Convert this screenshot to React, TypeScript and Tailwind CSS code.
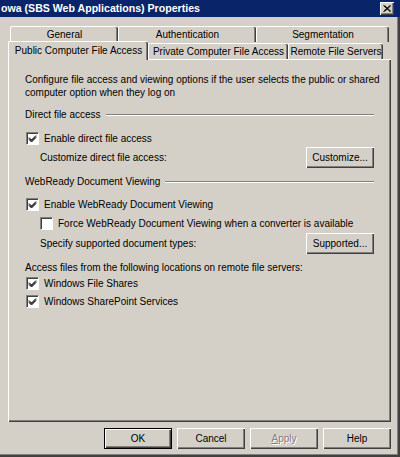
import React from "react";

const font = { fontFamily: '"Liberation Sans", Arial, sans-serif' };

function CheckBox({ checked }: { checked: boolean }) {
  return (
    <span className="relative inline-block w-[13px] h-[13px] shrink-0 bg-white border-t border-l border-[#808080] border-r border-b border-r-white border-b-white shadow-[inset_1px_1px_#404040]">
      {checked && (
        <svg className="absolute left-[1px] top-[1px]" width="9" height="9" viewBox="0 0 9 9">
          <path d="M1 3.5 L3.5 6 L8 1.5 M1 4.5 L3.5 7 L8 2.5 M1 5.5 L3.5 8 L8 3.5" stroke="#000" strokeWidth="1" fill="none" />
        </svg>
      )}
    </span>
  );
}

function Check({ checked, label }: { checked: boolean; label: string }) {
  return (
    <div className="flex items-center h-[13px]">
      <CheckBox checked={checked} />
      <span className="ml-[5px] text-[10px] leading-[13px] text-black whitespace-nowrap">{label}</span>
    </div>
  );
}

function Btn({ label, isDefault, disabled }: { label: React.ReactNode; isDefault?: boolean; disabled?: boolean }) {
  return (
    <button
      className={`w-[68px] h-[21px] bg-[#d4d0c8] text-[10px] leading-[13px] flex items-center justify-center whitespace-nowrap ${
        isDefault
          ? "border border-black shadow-[inset_1px_1px_#fff,inset_-1px_-1px_#404040,inset_-2px_-2px_#808080]"
          : "shadow-[inset_1px_1px_#fff,inset_-1px_-1px_#404040,inset_-2px_-2px_#808080]"
      } ${disabled ? "text-[#808080] [text-shadow:1px_1px_#fff]" : "text-black"}`}
    >
      {label}
    </button>
  );
}

function Section({ title }: { title: string }) {
  return (
    <div className="flex items-center h-[13px]">
      <span className="text-[10px] leading-[13px] whitespace-nowrap">{title}</span>
      <div className="flex-1 ml-[5px] h-[2px] border-t border-[#808080] border-b border-b-white" />
    </div>
  );
}

function Tab({ label, w, selected }: { label: string; w: number; selected?: boolean }) {
  return (
    <div
      className={`flex items-center justify-center bg-[#d4d0c8] rounded-t-[2px] border-t border-l border-white text-[10px] leading-[13px] whitespace-nowrap shadow-[inset_-1px_0_#404040,inset_-2px_0_#808080] ${
        selected ? "h-[19px] relative z-10 -mb-[1px] pb-[1px]" : "h-[16px]"
      }`}
      style={{ width: w }}
    >
      {label}
    </div>
  );
}

export default function App() {
  return (
    <div
      className="w-[400px] h-[457px] bg-[#d4d0c8] text-black flex flex-col shadow-[inset_-1px_-1px_#404040,inset_-2px_-2px_#404040,inset_-3px_-3px_#808080]"
      style={font}
    >
      {/* title bar */}
      <div className="h-[17px] bg-[#0a246a] flex items-center justify-between pl-[1px] pr-[6px]">
        <span className="text-white font-bold text-[10.6px] leading-[13px] whitespace-nowrap">owa (SBS Web Applications) Properties</span>
        <span className="w-[14px] h-[13px] bg-[#d4d0c8] flex items-center justify-center shadow-[inset_1px_1px_#fff,inset_-1px_-1px_#404040,inset_-2px_-2px_#808080]">
          <svg width="8" height="7" viewBox="0 0 8 7">
            <path d="M0.5 0.5 L7 6.5 M1.5 0.5 L8 6.5 M7 0.5 L0.5 6.5 M8 0.5 L1.5 6.5" stroke="#000" strokeWidth="1" fill="none" />
          </svg>
        </span>
      </div>

      {/* tabs */}
      <div className="pt-[9px]">
        <div className="flex pl-[10px]">
          <Tab label="General" w={108} />
          <Tab label="Authentication" w={138} />
          <Tab label="Segmentation" w={133} />
        </div>
        <div className="flex items-end pl-[8px] -mt-[1px]">
          <Tab label="Public Computer File Access" w={140} selected />
          <Tab label="Private Computer File Access" w={140} />
          <Tab label="Remote File Servers" w={95} />
        </div>
      </div>

      {/* panel */}
      <div className="ml-[8px] mr-[9px] h-[363px] border-t border-l border-white shadow-[inset_-1px_-1px_#404040,inset_-2px_-2px_#808080] pl-[16px] pr-[17px] pt-[13px]">
        <p className="text-[10px] leading-[13px] whitespace-nowrap">
          Configure file access and viewing options if the user selects the public or shared
          <br />
          computer option when they log on
        </p>

        <div className="mt-[9px]">
          <Section title="Direct file access" />
        </div>
        <div className="mt-[11px] pl-[1px]">
          <Check checked label="Enable direct file access" />
        </div>
        <div className="mt-[2px] flex items-center justify-between pl-[15px]">
          <span className="text-[10px] leading-[13px]">Customize direct file access:</span>
          <Btn label="Customize..." />
        </div>

        <div className="mt-[7px]">
          <Section title="WebReady Document Viewing" />
        </div>
        <div className="mt-[10px] pl-[1px]">
          <Check checked label="Enable WebReady Document Viewing" />
        </div>
        <div className="mt-[6px] pl-[15px]">
          <Check checked={false} label="Force WebReady Document Viewing when a converter is available" />
        </div>
        <div className="mt-[3px] flex items-center justify-between pl-[15px]">
          <span className="text-[10px] leading-[13px]">Specify supported document types:</span>
          <Btn label="Supported..." />
        </div>

        <p className="mt-[7px] text-[10px] leading-[13px] whitespace-nowrap">Access files from the following locations on remote file servers:</p>
        <div className="mt-[3px] pl-[1px]">
          <Check checked label="Windows File Shares" />
        </div>
        <div className="mt-[5px] pl-[1px]">
          <Check checked label="Windows SharePoint Services" />
        </div>
      </div>

      {/* buttons */}
      <div className="mt-[6px] flex justify-end gap-[5px] pr-[9px]">
        <Btn label="OK" isDefault />
        <Btn label="Cancel" />
        <Btn
          label={
            <span>
              <span className="underline">A</span>pply
            </span>
          }
          disabled
        />
        <Btn label="Help" />
      </div>
    </div>
  );
}
